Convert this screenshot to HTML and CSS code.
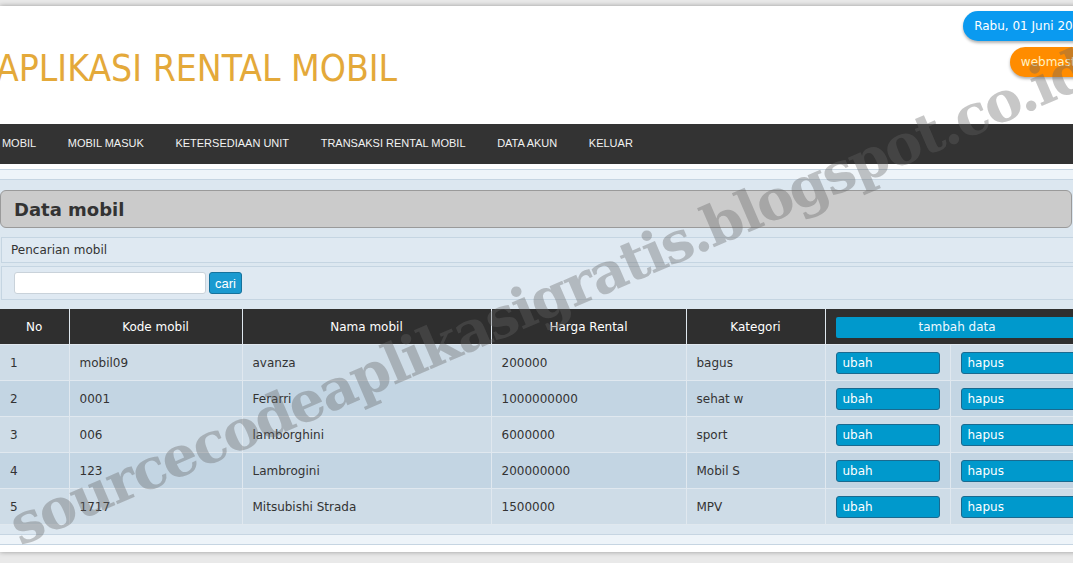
FILE: index.html
```html
<!DOCTYPE html>
<html lang="id">
<head>
<meta charset="utf-8">
<title>Aplikasi Rental Mobil</title>
<link rel="stylesheet" href="styles.css">
</head>
<body>
<div class="page">
  <header class="header">
    <h1 class="title">APLIKASI RENTAL MOBIL</h1>
    <div class="badges">
      <span class="badge badge-date">Rabu, 01 Juni 2016</span>
      <span class="badge badge-user">webmaster</span>
    </div>
  </header>
  <nav class="nav">
    <ul>
      <li>DATA MOBIL</li>
      <li>MOBIL MASUK</li>
      <li>KETERSEDIAAN UNIT</li>
      <li>TRANSAKSI RENTAL MOBIL</li>
      <li>DATA AKUN</li>
      <li>KELUAR</li>
    </ul>
  </nav>
  <main class="content">
    <div class="inner">
      <div class="panel-title">Data mobil</div>
      <div class="search-label">Pencarian mobil</div>
      <form class="search-row">
        <input class="search-input" type="text">
        <button class="btn-cari" type="button">cari</button>
      </form>
      <table class="data">
        <colgroup>
          <col class="c-no"><col class="c-kode"><col class="c-nama"><col class="c-harga"><col class="c-kat"><col class="c-ubah"><col class="c-hapus">
        </colgroup>
        <thead>
          <tr>
            <th>No</th><th>Kode mobil</th><th>Nama mobil</th><th>Harga Rental</th><th>Kategori</th>
            <th colspan="2" class="th-action"><span class="btn-add">tambah data</span></th>
          </tr>
        </thead>
        <tbody>
          <tr><td>1</td><td>mobil09</td><td>avanza</td><td>200000</td><td>bagus</td><td><span class="btn">ubah</span></td><td><span class="btn">hapus</span></td></tr>
          <tr><td>2</td><td>0001</td><td>Ferarri</td><td>1000000000</td><td>sehat w</td><td><span class="btn">ubah</span></td><td><span class="btn">hapus</span></td></tr>
          <tr><td>3</td><td>006</td><td>lamborghini</td><td>6000000</td><td>sport</td><td><span class="btn">ubah</span></td><td><span class="btn">hapus</span></td></tr>
          <tr><td>4</td><td>123</td><td>Lambrogini</td><td>200000000</td><td>Mobil S</td><td><span class="btn">ubah</span></td><td><span class="btn">hapus</span></td></tr>
          <tr><td>5</td><td>1717</td><td>Mitsubishi Strada</td><td>1500000</td><td>MPV</td><td><span class="btn">ubah</span></td><td><span class="btn">hapus</span></td></tr>
        </tbody>
      </table>
    </div>
  </main>
  <div class="watermark">sourcecodeaplikasigratis.blogspot.co.id</div>
</div>
</body>
</html>
```
FILE: styles.css
```css
html, body {
  margin: 0;
}
body {
  background: #e9e9e9;
  padding-top: 6px;
  height: 557px;
  overflow: hidden;
  font-family: "DejaVu Sans", Verdana, sans-serif;
  font-size: 12px;
  color: #333;
}
.page {
  position: relative;
  width: 1110px;
  background: #fff;
  box-shadow: 0 0 5px rgba(0, 0, 0, 0.35);
  padding-bottom: 7px;
  overflow: hidden;
}
.header {
  height: 118px;
  display: flex;
  justify-content: space-between;
  align-items: flex-start;
}
.title {
  margin: 43px 0 0 -4px;
  font-family: "DejaVu Sans", Verdana, sans-serif;
  font-stretch: condensed;
  font-weight: normal;
  font-size: 37px;
  line-height: 40px;
  color: #e4a93a;
}
.badges {
  display: flex;
  flex-direction: column;
  align-items: flex-end;
  gap: 6px;
  padding: 5px 11px 0 0;
}
.badge {
  height: 30px;
  line-height: 30px;
  padding: 0 11px;
  border-radius: 15px;
  box-shadow: 0 2px 3px rgba(0, 0, 0, 0.3);
  color: #fff;
  font-size: 12px;
  white-space: nowrap;
}
.badge-date {
  background: #0a9af0;
}
.badge-user {
  background: #ff8c00;
  color: #fff2c4;
}
.nav {
  background: #333;
  height: 40px;
}
.nav ul {
  list-style: none;
  margin: 0 0 0 -44px;
  padding: 0;
  display: flex;
  height: 40px;
  align-items: center;
}
.nav li {
  padding: 0 15.8px;
  font-family: "Liberation Sans", Arial, sans-serif;
  font-size: 11px;
  line-height: 11px;
  margin-top: -1px;
  color: #f2f2f2;
  white-space: nowrap;
}
.content {
  margin-top: 5px;
  border-top: 1px solid #c6d5e2;
  border-bottom: 1px solid #c6d5e2;
  background: #eef4f9;
  padding: 9px 0;
}
.inner {
  border-top: 1px solid #c6d5e2;
  border-bottom: 1px solid #c6d5e2;
  background: #dce7f0;
  padding: 10px 0 9px;
}
.panel-title {
  box-sizing: border-box;
  width: 1072px;
  height: 38px;
  border: 1px solid #9a9a9a;
  border-radius: 6px;
  background: #cbcbcb;
  font-size: 18px;
  font-weight: bold;
  line-height: 37px;
  padding-left: 13px;
  color: #333;
}
.search-label {
  margin: 9px 0 0 1px;
  height: 24px;
  line-height: 25px;
  border: 1px solid #c5d5e2;
  border-right: none;
  background: #dfe9f2;
  padding-left: 9px;
}
.search-row {
  margin: 3px 0 0 1px;
  height: 32px;
  border: 1px solid #c5d5e2;
  border-right: none;
  background: #dfe9f2;
  padding-left: 12px;
  display: flex;
  align-items: center;
  gap: 3px;
}
.search-input {
  box-sizing: border-box;
  width: 192px;
  height: 22px;
  margin: 0;
  border: 1px solid #c9d2da;
  border-radius: 3px;
  background: #fff;
}
.btn-cari {
  box-sizing: border-box;
  width: 33px;
  height: 22px;
  margin: 0;
  padding: 0;
  border: 1px solid #16729c;
  border-radius: 3px;
  background: #1a9ad0;
  color: #fff;
  font-family: "Liberation Sans", Arial, sans-serif;
  font-size: 13px;
}
.data {
  margin-top: 9px;
  width: 1089px;
  border-collapse: collapse;
  table-layout: fixed;
}
.c-no { width: 69px; }
.c-kode { width: 173px; }
.c-nama { width: 249px; }
.c-harga { width: 195px; }
.c-kat { width: 139px; }
.c-ubah { width: 125px; }
.c-hapus { width: 139px; }
.data th {
  height: 35px;
  padding: 0;
  line-height: 16px;
  background: #2f2f2f;
  color: #fff;
  font-weight: normal;
  text-align: center;
  border-left: 1px solid #e0e8ef;
  border-right: 1px solid #e0e8ef;
}
.data th:first-child {
  border-left: none;
}
.data th.th-action {
  padding: 0 10px;
}
.btn-add {
  display: block;
  height: 21px;
  line-height: 21px;
  margin-top: 1px;
  border-radius: 2px;
  background: #0099cc;
  color: #eef8ff;
  text-align: center;
}
.data td {
  height: 35px;
  padding: 0 10px;
  border: 1px solid #e0e8ef;
  white-space: nowrap;
}
.data td:first-child {
  border-left: none;
}
.data tbody tr:nth-child(odd) td {
  background: #cedce7;
}
.data tbody tr:nth-child(even) td {
  background: #c3d5e3;
}
.btn {
  display: block;
  box-sizing: border-box;
  height: 22px;
  line-height: 20px;
  border: 1px solid #1a6a90;
  border-radius: 3px;
  background: #0099cc;
  color: #fff;
  padding-left: 6px;
}
.watermark {
  position: absolute;
  left: 20px;
  top: 492px;
  font-family: "DejaVu Serif", "Liberation Serif", serif;
  font-weight: bold;
  font-size: 56px;
  line-height: 56px;
  letter-spacing: -2px;
  white-space: nowrap;
  color: rgba(100, 100, 100, 0.36);
  transform-origin: 0 47.4px;
  transform: rotate(-23.3deg);
  pointer-events: none;
}
```
